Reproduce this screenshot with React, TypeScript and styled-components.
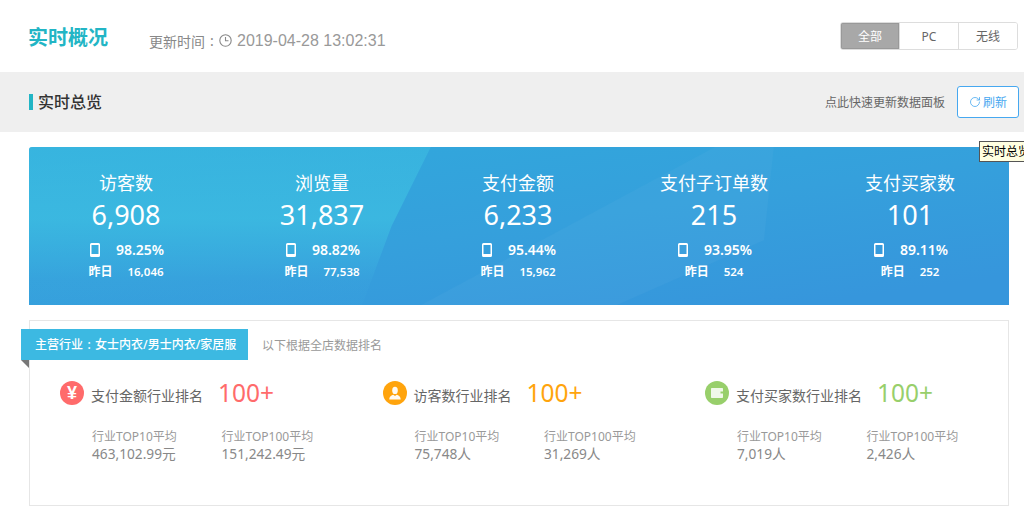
import React from "react";
import styled, { createGlobalStyle } from "styled-components";
import { RotateCw } from "lucide-react";

const Global = createGlobalStyle`
  html, body { margin: 0; padding: 0; background: #fff; overflow: hidden; }
  body { font-family: "Noto Sans", "Noto Sans CJK SC", sans-serif; }
  * { box-sizing: border-box; }
`;

const Page = styled.div`
  position: relative;
  width: 1024px;
  height: 524px;
  overflow: hidden;
`;

const Header = styled.header`
  height: 72px;
  display: flex;
  align-items: center;
  padding: 0 6px 0 28px;
`;
const PageTitle = styled.h1`
  margin: 0 41px 0 0;
  font-size: 20px;
  line-height: 28px;
  font-weight: 700;
  color: #22b5c5;
  position: relative;
  top: 2px;
`;
const UpdateInfo = styled.div`
  display: flex;
  align-items: center;
  font-size: 14px;
  color: #888;
  margin-top: 9px;
`;
const InfoColon = styled.span`
  width: 14px;
  text-align: center;
`;
const ClockIcon = styled.svg`
  width: 13px;
  height: 13px;
  margin: 0 5px 0 0;
`;
const DateText = styled.span`
  font-family: "Liberation Sans", sans-serif;
  font-size: 16px;
  color: #999;
`;
const Segments = styled.div`
  margin-left: auto;
  display: flex;
  width: 178px;
  height: 28px;
  border: 1px solid #ddd;
  border-radius: 3px;
  overflow: hidden;
`;
const Segment = styled.div<{ $active?: boolean }>`
  flex: 1;
  display: flex;
  align-items: center;
  justify-content: center;
  font-size: 12px;
  color: ${(p) => (p.$active ? "#fff" : "#666")};
  background: ${(p) => (p.$active ? "#a8a8a8" : "#fff")};
  box-shadow: ${(p) => (p.$active ? "0 0 0 1px #999 inset" : "none")};
  & + & {
    border-left: 1px solid #ddd;
  }
`;

const SectionBar = styled.section`
  height: 60px;
  background: #efefef;
  display: flex;
  align-items: center;
  padding: 0 5px 0 29px;
`;
const SectionTitle = styled.h2`
  margin: 0;
  padding-left: 5px;
  border-left: 4px solid #22b5c5;
  height: 16px;
  line-height: 16px;
  font-size: 16px;
  font-weight: 500;
  color: #333;
`;
const Hint = styled.span`
  margin-left: auto;
  font-size: 12px;
  color: #666;
`;
const RefreshButton = styled.button`
  margin-left: 12px;
  width: 62px;
  height: 32px;
  border: 1px solid #46a8f0;
  border-radius: 3px;
  background: #fff;
  color: #46a8f0;
  font: inherit;
  font-size: 12px;
  display: flex;
  align-items: center;
  justify-content: center;
  gap: 2px;
  padding: 0;
`;

const Banner = styled.section`
  position: relative;
  margin: 15px 15px 0 29px;
  height: 158px;
  border-radius: 3px 0 0 0;
  overflow: hidden;
  display: grid;
  grid-template-columns: repeat(5, 196px);
  background: linear-gradient(172deg, #30a9dc 0%, #35a0dc 50%, #3696dc 90%);
`;
const LightBand = styled.div`
  position: absolute;
  inset: 0;
  background: rgba(255, 255, 255, 0.03);
  clip-path: polygon(40% 100%, 60% 100%, 75% 59%, 76% 0, 70% 0);
`;
const CyanFacet = styled.div`
  position: absolute;
  inset: 0;
  background: linear-gradient(
    180deg,
    rgba(62, 192, 226, 0.5) 0%,
    rgba(62, 192, 226, 0.7) 45%,
    rgba(62, 170, 224, 0.2) 85%,
    rgba(62, 170, 224, 0.1) 100%
  );
  clip-path: polygon(0 0, 41% 0, 37% 50%, 34% 100%, 0 100%);
`;
const Metric = styled.div`
  position: relative;
  display: flex;
  flex-direction: column;
  align-items: center;
  color: #fff;
  padding: 23px 2px 0 0;
`;
const MetricLabel = styled.div`
  font-size: 18px;
  line-height: 26px;
`;
const MetricValue = styled.div`
  font-size: 27px;
  line-height: 38px;
`;
const MetricRow = styled.div`
  display: flex;
  align-items: center;
  font-weight: 600;
`;
const PhoneRow = styled(MetricRow)`
  font-size: 14px;
  line-height: 20px;
  margin: 6px 0 0 2px;
  gap: 16px;
`;
const YesterdayRow = styled(MetricRow)`
  font-size: 12px;
  line-height: 20px;
  margin-top: 2px;
  gap: 15px;
`;
const YesterdayNumber = styled.span`
  font-size: 11.5px;
`;
const PhoneIcon = styled.svg`
  width: 10px;
  height: 14px;
`;

const Card = styled.section`
  margin: 15px 15px 0 29px;
  height: 186px;
  border: 1px solid #e6e6e6;
`;
const TagRow = styled.div`
  display: flex;
  align-items: center;
  margin: 8px 0 0 -9px;
`;
const Tag = styled.div`
  position: relative;
  height: 31px;
  width: 227px;
  padding-left: 14px;
  background: #3cb9e2;
  color: #fff;
  font-size: 12px;
  font-weight: 500;
  line-height: 31px;
  white-space: nowrap;
  &::after {
    content: "";
    position: absolute;
    left: 0;
    top: 31px;
    border-style: solid;
    border-width: 0 8px 8px 0;
    border-color: transparent #777 transparent transparent;
  }
`;
const TagColon = styled.span`
  display: inline-block;
  width: 12px;
  text-align: center;
`;
const TagNote = styled.span`
  margin-left: 14px;
  font-size: 12px;
  color: #999;
`;
const RankGrid = styled.div`
  display: grid;
  grid-template-columns: 322.5px 322.5px 1fr;
  padding: 20px 0 0 30px;
`;
const Rank = styled.div``;
const RankHead = styled.div`
  display: flex;
  align-items: center;
  height: 26px;
`;
const RankIcon = styled.div<{ $color: string }>`
  width: 24px;
  height: 24px;
  border-radius: 50%;
  background: ${(p) => p.$color};
  color: #fff;
  display: flex;
  align-items: center;
  justify-content: center;
  font-size: 18px;
  font-weight: 700;
  margin-right: 7px;
  font-family: "Liberation Sans", sans-serif;
`;
const RankLabel = styled.span`
  font-size: 14px;
  color: #666;
  margin-top: 3px;
`;
const RankValue = styled.span<{ $color: string }>`
  font-size: 24.5px;
  line-height: 26px;
  color: ${(p) => p.$color};
  margin-left: 15px;
`;
const Stats = styled.div`
  display: grid;
  grid-template-columns: 129.5px 1fr;
  padding: 23px 0 0 32px;
`;
const StatLabel = styled.div`
  font-size: 12px;
  line-height: 16px;
  color: #999;
`;
const StatValue = styled.div`
  font-size: 13.7px;
  line-height: 18px;
  color: #888;
`;
const Tooltip = styled.div`
  position: absolute;
  left: 979px;
  top: 141px;
  height: 21px;
  padding: 0 2px;
  background: #ffffe1;
  border: 1px solid #555;
  font-size: 12px;
  line-height: 20px;
  color: #000;
  white-space: nowrap;
`;

const Phone = () => (
  <PhoneIcon viewBox="0 0 10 14" aria-hidden="true">
    <path fill="#fff" fillRule="evenodd" d="M1.5 0h7A1.5 1.5 0 0 1 10 1.5v11A1.5 1.5 0 0 1 8.5 14h-7A1.5 1.5 0 0 1 0 12.5v-11A1.5 1.5 0 0 1 1.5 0ZM1.5 2v9h7V2Z" />
  </PhoneIcon>
);

const metrics = [
  { label: "访客数", value: "6,908", pct: "98.25%", prev: "16,046" },
  { label: "浏览量", value: "31,837", pct: "98.82%", prev: "77,538" },
  { label: "支付金额", value: "6,233", pct: "95.44%", prev: "15,962" },
  { label: "支付子订单数", value: "215", pct: "93.95%", prev: "524" },
  { label: "支付买家数", value: "101", pct: "89.11%", prev: "252" },
];

const UserGlyph = () => (
  <svg width="14" height="14" viewBox="0 0 16 16" aria-hidden="true">
    <ellipse cx="8" cy="5" rx="3.2" ry="4.2" fill="#fff" opacity="0.95" />
    <path fill="#fff" opacity="0.95" d="M1.5 15.5c0-3.6 2.5-4.8 4.5-5.4L8 11.4l2-1.3c2 .6 4.5 1.8 4.5 5.4Z" />
  </svg>
);
const WalletGlyph = () => (
  <svg width="12" height="10" viewBox="0 0 12 10" aria-hidden="true">
    <path fill="#fff" opacity="0.85" d="M0 1C0 .4.4 0 1 0h10c.6 0 1 .4 1 1v8c0 .6-.4 1-1 1H1c-.6 0-1-.4-1-1Z" />
    <rect x="9.5" y="3.5" width="2.5" height="2" fill="#98cf6b" />
  </svg>
);

const ranks = [
  { label: "支付金额行业排名", color: "#ff6b6b", icon: "¥", top10: "463,102.99元", top100: "151,242.49元" },
  { label: "访客数行业排名", color: "#ffa40d", icon: <UserGlyph />, top10: "75,748人", top100: "31,269人" },
  { label: "支付买家数行业排名", color: "#98cf6b", icon: <WalletGlyph />, top10: "7,019人", top100: "2,426人" },
];

export default function App() {
  return (
    <Page>
      <Global />
      <Header>
        <PageTitle>实时概况</PageTitle>
        <UpdateInfo>
          更新时间
          <InfoColon>:</InfoColon>
          <ClockIcon viewBox="0 0 13 13" aria-hidden="true">
            <circle cx="6.5" cy="6.5" r="5.7" fill="none" stroke="#888" strokeWidth="1.1" />
            <path d="M6.5 3v3.8h3" fill="none" stroke="#888" strokeWidth="1.1" />
          </ClockIcon>
          <DateText>2019-04-28 13:02:31</DateText>
        </UpdateInfo>
        <Segments>
          <Segment $active>全部</Segment>
          <Segment>PC</Segment>
          <Segment>无线</Segment>
        </Segments>
      </Header>
      <SectionBar>
        <SectionTitle>实时总览</SectionTitle>
        <Hint>点此快速更新数据面板</Hint>
        <RefreshButton>
          <RotateCw size={12} strokeWidth={1.6} />
          刷新
        </RefreshButton>
      </SectionBar>
      <Banner>
        <CyanFacet />
        <LightBand />
        {metrics.map((m) => (
          <Metric key={m.label}>
            <MetricLabel>{m.label}</MetricLabel>
            <MetricValue>{m.value}</MetricValue>
            <PhoneRow>
              <Phone />
              <span>{m.pct}</span>
            </PhoneRow>
            <YesterdayRow>
              <span>昨日</span>
              <YesterdayNumber>{m.prev}</YesterdayNumber>
            </YesterdayRow>
          </Metric>
        ))}
      </Banner>
      <Card>
        <TagRow>
          <Tag>
            主营行业<TagColon>:</TagColon>女士内衣/男士内衣/家居服
          </Tag>
          <TagNote>以下根据全店数据排名</TagNote>
        </TagRow>
        <RankGrid>
          {ranks.map((r) => (
            <Rank key={r.label}>
              <RankHead>
                <RankIcon $color={r.color}>{r.icon}</RankIcon>
                <RankLabel>{r.label}</RankLabel>
                <RankValue $color={r.color}>100+</RankValue>
              </RankHead>
              <Stats>
                <div>
                  <StatLabel>行业TOP10平均</StatLabel>
                  <StatValue>{r.top10}</StatValue>
                </div>
                <div>
                  <StatLabel>行业TOP100平均</StatLabel>
                  <StatValue>{r.top100}</StatValue>
                </div>
              </Stats>
            </Rank>
          ))}
        </RankGrid>
      </Card>
      <Tooltip>实时总览</Tooltip>
    </Page>
  );
}
